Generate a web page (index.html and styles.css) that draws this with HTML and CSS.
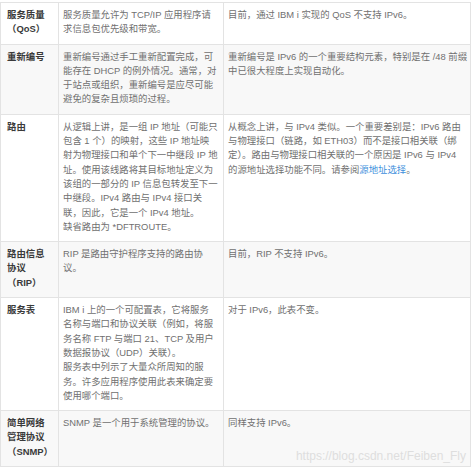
FILE: index.html
```html
<!DOCTYPE html>
<html lang="zh-CN">

<head>
    <meta charset="UTF-8">
    <meta name="viewport" content="width=device-width, initial-scale=1.0">
    <title>IPv6 与 IPv4 比较</title>
    <link rel="stylesheet" href="styles.css">
</head>

<body>
    <div class="sheet">
        <table class="compare">
            <colgroup>
                <col class="col-name">
                <col class="col-v4">
                <col class="col-v6">
            </colgroup>
            <tbody>
                <tr>
                    <th>服务质量<br>（QoS）</th>
                    <td>服务质量允许为 TCP/IP 应用程序请<br>求信息包优先级和带宽。</td>
                    <td>目前，通过 IBM i 实现的 QoS 不支持 IPv6。</td>
                </tr>
                <tr>
                    <th>重新编号</th>
                    <td>重新编号通过手工重新配置完成，可<br>能存在 DHCP 的例外情况。通常，对<br>于站点或组织，重新编号是应尽可能<br>避免的复杂且烦琐的过程。</td>
                    <td>重新编号是 IPv6 的一个重要结构元素，特别是在 /48 前缀<br>中已很大程度上实现自动化。</td>
                </tr>
                <tr>
                    <th>路由</th>
                    <td>从逻辑上讲，是一组 IP 地址（可能只<br>包含 1 个）的映射，这些 IP 地址映<br>射为物理接口和单个下一中继段 IP 地<br>址。使用该线路将其目标地址定义为<br>该组的一部分的 IP 信息包转发至下一<br>中继段。IPv4 路由与 IPv4 接口关<br>联，因此，它是一个 IPv4 地址。<br>缺省路由为 *DFTROUTE。</td>
                    <td>从概念上讲，与 IPv4 类似。一个重要差别是：IPv6 路由<br>与物理接口（链路，如 ETH03）而不是接口相关联（绑<br>定）。路由与物理接口相关联的一个原因是 IPv6 与 IPv4<br>的源地址选择功能不同。请参阅<a href="#">源地址选择</a>。</td>
                </tr>
                <tr>
                    <th>路由信息<br>协议<br>（RIP）</th>
                    <td>RIP 是路由守护程序支持的路由协<br>议。</td>
                    <td>目前，RIP 不支持 IPv6。</td>
                </tr>
                <tr>
                    <th>服务表</th>
                    <td>IBM i 上的一个可配置表，它将服务<br>名称与端口和协议关联（例如，将服<br>务名称 FTP 与端口 21、TCP 及用户<br>数据报协议（UDP）关联）。<br>服务表中列示了大量众所周知的服<br>务。许多应用程序使用此表来确定要<br>使用哪个端口。</td>
                    <td>对于 IPv6，此表不变。</td>
                </tr>
                <tr>
                    <th>简单网络<br>管理协议<br>（SNMP）</th>
                    <td>SNMP 是一个用于系统管理的协议。</td>
                    <td>同样支持 IPv6。</td>
                </tr>
            </tbody>
        </table>
        <div class="watermark">https://blog.csdn.net/Feiben_Fly</div>
    </div>
</body>

</html>
```

FILE: styles.css
```css
body {
    margin: 0;
    font-family: "Liberation Sans", "Noto Sans CJK SC", sans-serif;
    font-size: 9.4px;
    color: #707070;
    background-color: #fff;
}

.sheet {
    position: relative;
    width: 471px;
    padding-top: 2px;
}

.compare {
    width: 471px;
    border-collapse: collapse;
    table-layout: fixed;
}

.col-name {
    width: 58px;
}

.col-v4 {
    width: 165px;
}

.compare th,
.compare td {
    border: 1px solid #e3e3e3;
    padding: 5px 3px 7px 4px;
    line-height: 14.3px;
    text-align: left;
    vertical-align: top;
    white-space: nowrap;
}

.compare th {
    font-weight: bold;
    color: #3a3a3a;
    padding-left: 6px;
}

.compare tr:nth-child(even) {
    background-color: #f8f8f8;
}

.compare a {
    color: #3d8fdc;
    text-decoration: none;
}

.watermark {
    position: absolute;
    right: 5px;
    bottom: 4px;
    font-size: 12px;
    color: #dedede;
}
```
